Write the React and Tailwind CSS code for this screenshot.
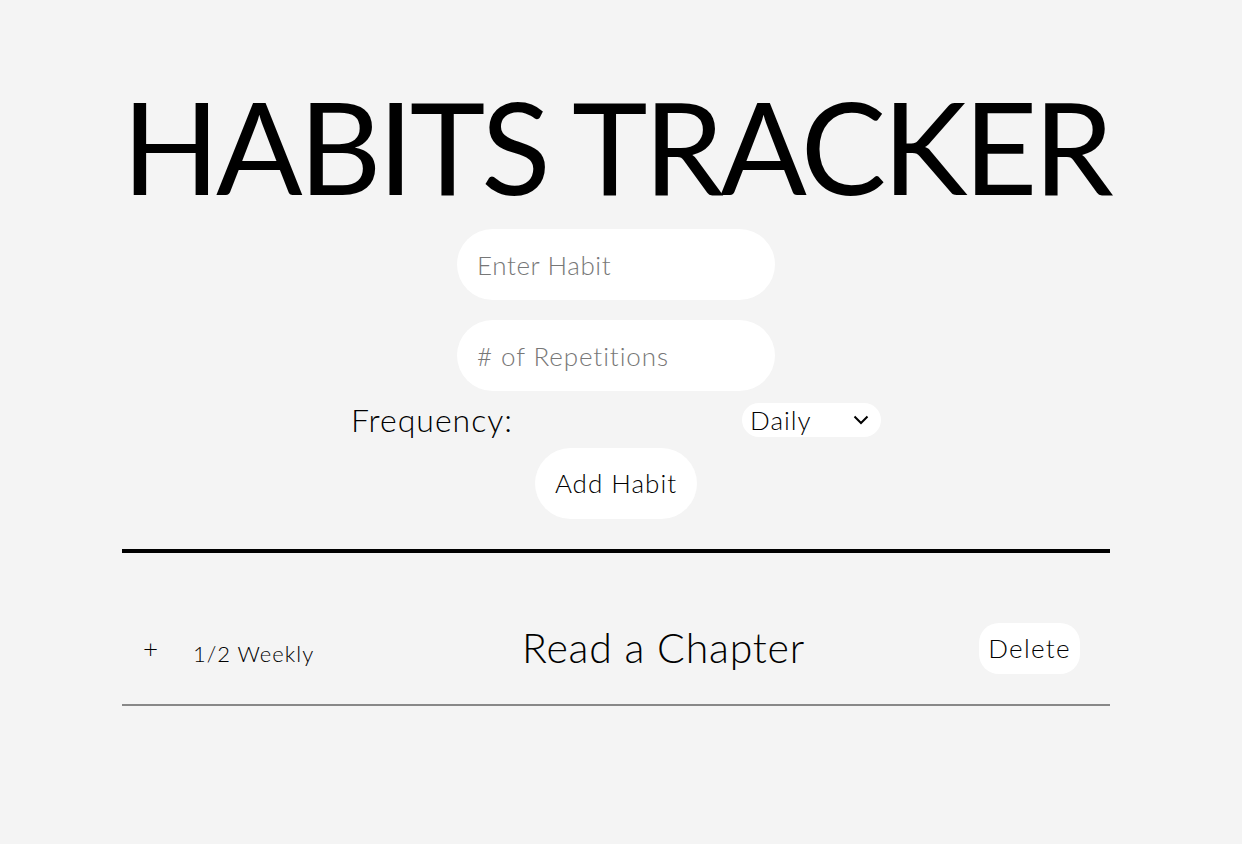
import React, { useState } from "react";

const font = { fontFamily: "Lato, 'Open Sans', sans-serif" };

export default function App() {
  const [habits] = useState([{ name: "Read a Chapter", done: 1, total: 2, freq: "Weekly" }]);

  return (
    <div className="min-h-[844px] bg-[#f4f4f4] text-black font-light" style={font}>
      <div className="ml-[122px] w-[988px] pt-[71px] flex flex-col items-center">
        <h1 className="text-[128px] leading-[150px] font-normal tracking-[-3.8px] whitespace-nowrap">HABITS TRACKER</h1>

        <input
          className="mt-[8px] w-[318px] h-[71px] rounded-full bg-white px-5 text-[26px] tracking-[0.6px] placeholder-[#777] outline-none"
          placeholder="Enter Habit"
        />
        <input
          className="mt-5 w-[318px] h-[71px] rounded-full bg-white px-5 text-[26px] tracking-[0.9px] placeholder-[#777] outline-none"
          placeholder="# of Repetitions"
        />

        <div className="mt-3 w-[530px] h-[34px] flex items-center justify-between">
          <label className="text-[32px] leading-[34px] tracking-[1px]">Frequency:</label>
          <div className="w-[139px] h-[34px] rounded-full bg-white flex items-center justify-between pl-2 pr-3">
            <span className="text-[26px] leading-[34px] tracking-[1px]">Daily</span>
            <svg width="16" height="10" viewBox="0 0 16 10" fill="none" stroke="black" strokeWidth="2">
              <path d="M1.5 1.5 L8 8 L14.5 1.5" />
            </svg>
          </div>
        </div>

        <button className="mt-[11px] w-[162px] h-[71px] rounded-full bg-white text-[26px] tracking-[1px]">Add Habit</button>

        <div className="mt-[30px] w-full h-[4px] bg-black" />

        {habits.map((h) => (
          <div key={h.name} className="w-full">
            <div className="h-[151px] flex items-center pt-[39px]">
              <span className="w-[56px] pl-[21px] text-[26px]">+</span>
              <span className="w-[344px] pl-[15px] pt-[10px] text-[22px] tracking-[1px]">
                {h.done}/{h.total} {h.freq}
              </span>
              <span className="text-[41px] tracking-[0.8px]">{h.name}</span>
              <button className="ml-auto mr-[30px] w-[101px] h-[51px] rounded-[20px] bg-white text-[26px] tracking-[1.3px]">Delete</button>
            </div>
            <div className="h-[2px] bg-[#888]" />
          </div>
        ))}
      </div>
    </div>
  );
}
